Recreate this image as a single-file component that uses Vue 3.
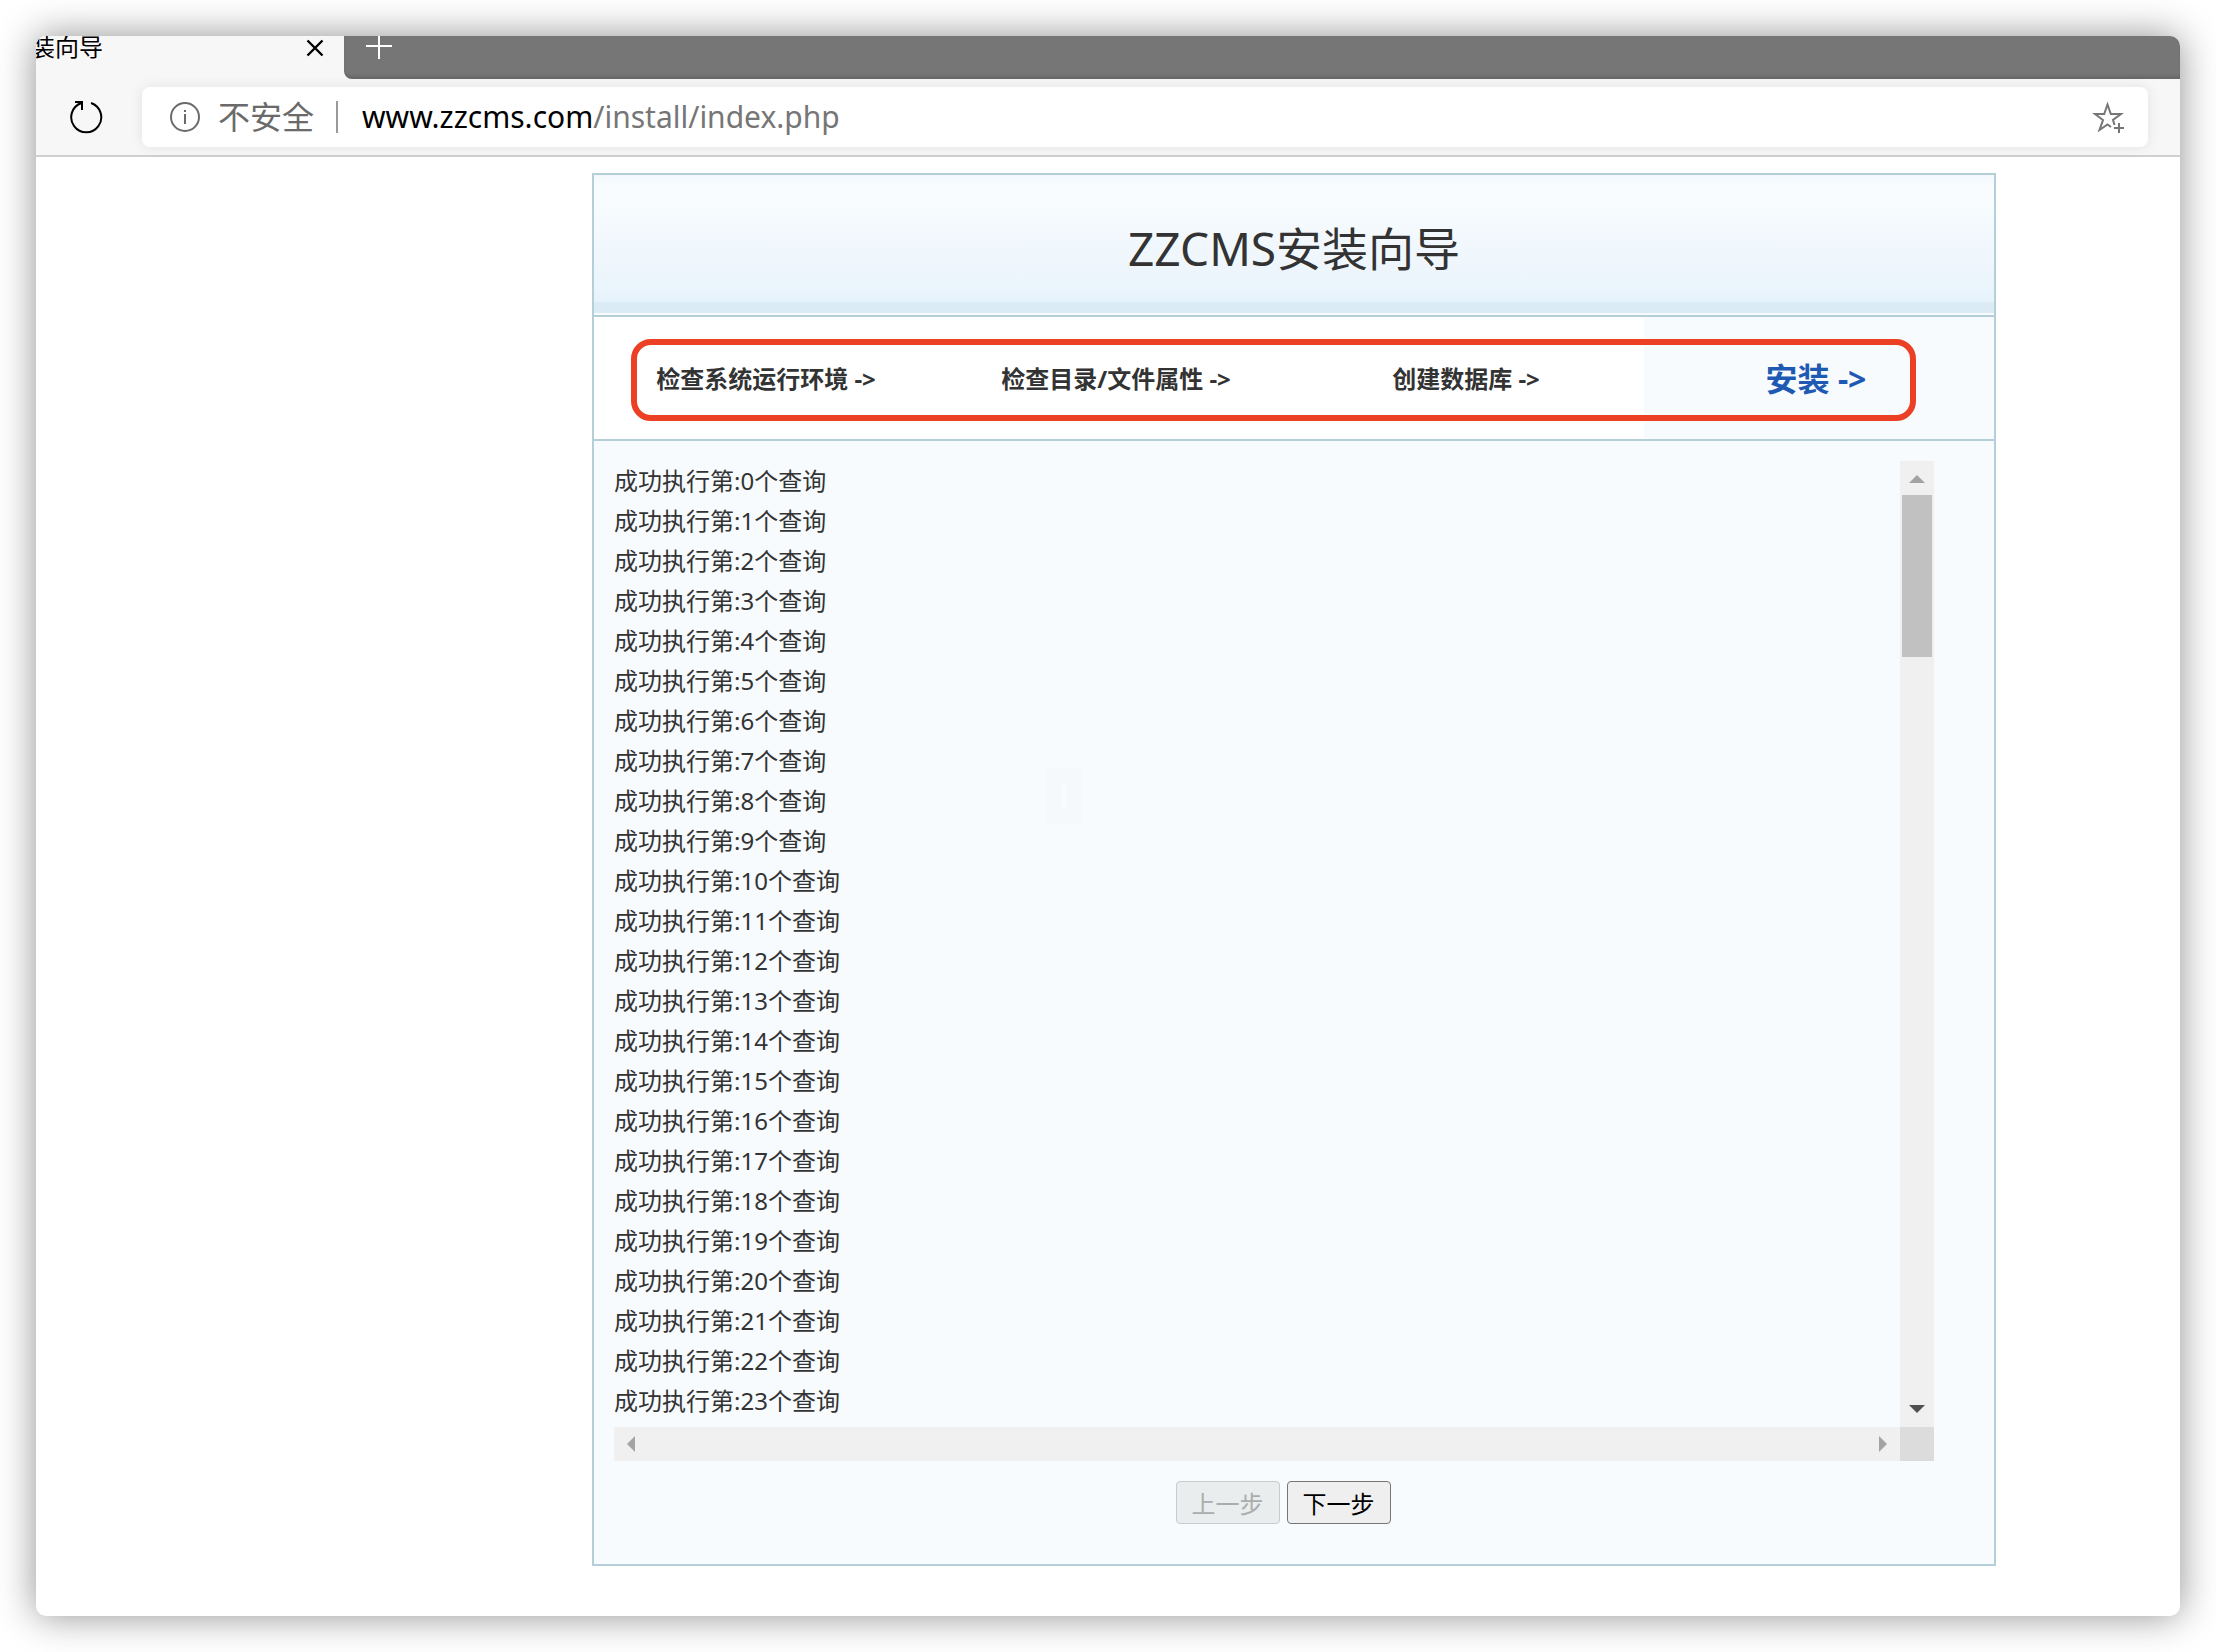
<script setup>
const steps = [
  { label: '检查系统运行环境 ->', current: false },
  { label: '检查目录/文件属性 ->', current: false },
  { label: '创建数据库 ->', current: false },
  { label: '安装 ->', current: true }
]
const queries = Array.from({ length: 24 }, (_, i) => `成功执行第:${i}个查询`)
</script>

<template>
  <div class="browser">
    <header class="tabs">
      <div class="tab">
        <span class="tab-title">装向导</span>
        <button class="icon-btn tab-close" aria-label="关闭标签页">
          <svg width="20" height="20" viewBox="0 0 20 20"><path d="M2.5 2.5 17.5 17.5M17.5 2.5 2.5 17.5" stroke="#000" stroke-width="2.4" fill="none" /></svg>
        </button>
      </div>
      <div class="strip">
        <button class="icon-btn" aria-label="新建标签页">
          <svg width="28" height="28" viewBox="0 0 28 28"><path d="M1 14H27M14 1V27" stroke="#fff" stroke-width="2" fill="none" /></svg>
        </button>
      </div>
    </header>

    <div class="toolbar">
      <button class="icon-btn reload" aria-label="刷新">
        <svg width="36" height="36" viewBox="0 0 36 36" fill="none" stroke="#000" stroke-width="2">
          <path d="M22 4A15 15 0 1 1 12.500 4" />
          <path d="M6 3H13V11" />
        </svg>
      </button>
      <div class="address">
        <svg class="info" width="30" height="30" viewBox="0 0 30 30" fill="none" stroke="#6a6a6a" stroke-width="2">
          <circle cx="15" cy="15" r="14" />
          <path d="M15 8V10M15 12V22" />
        </svg>
        <span class="insecure">不安全</span>
        <span class="divider"></span>
        <a class="url" href="#"><span class="host">www.zzcms.com</span>/install/index.php</a>
        <button class="icon-btn" aria-label="添加到收藏夹">
          <svg width="32" height="32" viewBox="0 0 32 32" fill="none" stroke="#767676" stroke-width="2">
            <path d="M22.500 24 21 19 29 13H18.800L15.500 3.500 12.200 13H3L11 19 7.500 29 15.500 23.500 19 26" />
            <path d="M22 27H32M27 22V32" />
          </svg>
        </button>
      </div>
    </div>

    <main class="page">
      <section class="panel">
        <h1 class="title">ZZCMS安装向导</h1>
        <ol class="steps">
          <li v-for="s in steps" :key="s.label" class="step" :class="{ current: s.current }">{{ s.label }}</li>
        </ol>
        <div class="body">
          <div class="log">
            <ul class="lines">
              <li v-for="q in queries" :key="q">{{ q }}</li>
            </ul>
            <div class="vbar">
              <svg width="16" height="8" viewBox="0 0 16 8"><path d="M0 8 8 0 16 8Z" fill="#a3a3a3" /></svg>
              <div class="thumb"></div>
              <svg width="16" height="8" viewBox="0 0 16 8"><path d="M0 0 8 8 16 0Z" fill="#505050" /></svg>
            </div>
            <div class="hbar">
              <svg width="8" height="16" viewBox="0 0 8 16"><path d="M8 0 0 8 8 16Z" fill="#a3a3a3" /></svg>
              <svg width="8" height="16" viewBox="0 0 8 16"><path d="M0 0 8 8 0 16Z" fill="#a3a3a3" /></svg>
            </div>
            <div class="corner"></div>
            <div class="ghost"></div>
          </div>
          <div class="actions">
            <button class="btn" disabled>上一步</button>
            <button class="btn">下一步</button>
          </div>
        </div>
      </section>
    </main>
  </div>
</template>

<style>
body {
  margin: 0;
  background: #fff;
}
#app {
  display: flow-root;
}
</style>

<style scoped>
* {
  box-sizing: border-box;
}
.browser {
  margin: 36px;
  border-radius: 10px;
  overflow: hidden;
  background: #fff;
  box-shadow: 0 0 38px rgba(0, 0, 0, 0.44);
  font-family: "Noto Sans", "Noto Sans CJK SC", sans-serif;
  color: #333;
}
.icon-btn {
  display: flex;
  flex: none;
  padding: 0;
  border: 0;
  background: none;
}
.tabs {
  display: flex;
  height: 43px;
  background: #f7f7f7;
}
.tab {
  display: flex;
  align-items: flex-start;
  justify-content: space-between;
  width: 308px;
  padding: 0 19px 0 0;
  overflow: hidden;
}
.tab-title {
  margin-left: -5px;
  font-size: 24px;
  line-height: 22px;
  color: #000;
}
.tab-close {
  margin-top: 2px;
}
.strip {
  flex: 1;
  padding-left: 21px;
  border-bottom-left-radius: 8px;
  background: #767676;
  box-shadow: inset 0 -4px 4px -2px rgba(0, 0, 0, 0.16);
  overflow: hidden;
}
.strip .icon-btn {
  margin-top: -4px;
}
.toolbar {
  display: flex;
  align-items: center;
  height: 78px;
  padding: 0 32px 0 33px;
  border-bottom: 2px solid #d0d0d0;
  background: #f7f7f7;
}
.reload {
  margin-right: 37px;
}
.address {
  display: flex;
  flex: 1;
  align-items: center;
  height: 60px;
  padding: 0 24px 0 28px;
  border-radius: 8px;
  background: #fff;
  box-shadow: 0 0 14px rgba(0, 0, 0, 0.09);
}
.insecure {
  margin-left: 18px;
  font-size: 32px;
  line-height: 40px;
  color: #6a6a6a;
}
.divider {
  width: 2px;
  height: 32px;
  margin: 0 24px 0 22px;
  background: #999;
}
.url {
  flex: 1;
  font-size: 30px;
  line-height: 40px;
  color: #767676;
  text-decoration: none;
}
.host {
  color: #000;
}
.page {
  padding: 16px 184px 50px 556px;
}
.panel {
  border: 2px solid #b5cfd8;
  background: #f7fbfe;
}
.title {
  height: 140px;
  margin: 0;
  background: linear-gradient(#f2f8fd 0, #f8fcfe 10px, #f8fcfe 20px, #edf5fc 100px, #e6f3fb 126px, #dbebf6 128px, #dbebf6 138px, #f7fbfd 138px);
  font-size: 46px;
  font-weight: 400;
  line-height: 146px;
  text-align: center;
}
.steps {
  position: relative;
  display: flex;
  height: 126px;
  margin: 0;
  padding: 0;
  border: solid #b5cfd8;
  border-width: 2px 0;
  background: #fff;
  list-style: none;
}
/* Red marker drawn over the whole row of steps */
.steps::after {
  content: "";
  position: absolute;
  inset: 22px 78px 18px 37px;
  border: 6px solid #ec4024;
  border-radius: 20px;
}
.step {
  flex: 1;
  padding-right: 6px;
  font-size: 24px;
  font-weight: 700;
  line-height: 124px;
  text-align: center;
  white-space: nowrap;
}
.current {
  background: #f7fbfe;
  font-size: 32px;
  color: #1e5ab4;
}
.body {
  padding: 20px 20px 40px;
}
.log {
  position: relative;
  display: grid;
  grid-template-columns: 1fr 34px;
  grid-template-rows: auto 34px;
  margin-right: 40px;
}
.lines {
  margin: 0;
  padding: 0 0 6px;
  font-size: 24px;
  line-height: 40px;
  list-style: none;
}
.vbar {
  display: flex;
  flex-direction: column;
  align-items: center;
  justify-content: space-between;
  padding: 14px 2px;
  background: #f0f0f0;
}
.thumb {
  width: 100%;
  height: 162px;
  margin: 12px 0 auto;
  background: #c1c1c1;
}
.hbar {
  display: flex;
  align-items: center;
  justify-content: space-between;
  padding: 0 13px;
  background: #f0f0f0;
}
.corner {
  background: #dcdcdc;
}
/* Faint translucent block hovering over the log */
.ghost {
  position: absolute;
  top: 307px;
  left: 432px;
  width: 37px;
  height: 56px;
  border: 16px solid #f5f9fc;
  background: #f9fcfe;
}
.actions {
  display: flex;
  justify-content: center;
  gap: 7px;
  margin-top: 20px;
  padding-right: 22px;
}
.btn {
  width: 104px;
  height: 43px;
  padding: 0;
  border: 1px solid #767676;
  border-radius: 4px;
  background: #efefef;
  font: inherit;
  font-size: 24px;
  color: #000;
}
.btn:disabled {
  border-color: #c8cccd;
  background: #e9eded;
  color: #a9adae;
}
</style>
